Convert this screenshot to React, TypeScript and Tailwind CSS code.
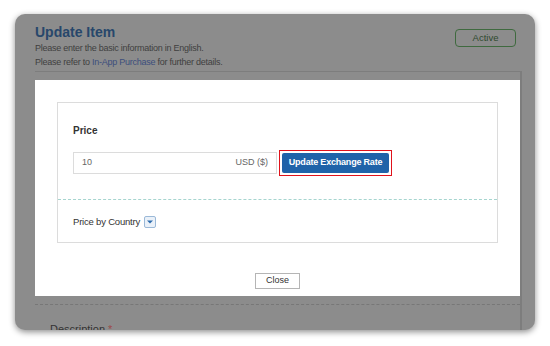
import React from 'react';

const font = { fontFamily: '"Liberation Sans", Arial, sans-serif' };

function DropIcon() {
  return (
    <span className="ml-[4px] inline-flex h-[12px] w-[12px] items-center justify-center rounded-[2px] border border-[#9bb9d8] bg-[#eaf1f9]">
      <svg width="6" height="4" viewBox="0 0 6 4">
        <path d="M0 0.5 L6 0.5 L3 3.5 Z" fill="#2d6cad" />
      </svg>
    </span>
  );
}

function PriceModal() {
  return (
    <div className="h-[216px] w-[485px] bg-white px-[22px] pt-[22px]">
      <div className="h-[141px] border border-[#dcdcdc]">
        <div className="px-[15px] pt-[21px]">
          <div className="text-[10px] font-bold leading-[14px] text-[#333]">Price</div>
          <div className="mt-[12px] flex items-center">
            <div className="flex h-[22px] w-[204px] items-center justify-between border border-[#dcdcdc] px-[8px] text-[9px] text-[#666]">
              <span>10</span>
              <span>USD ($)</span>
            </div>
            <div className="ml-[2px] border border-[#e0121b] p-[2px]">
              <button className="flex h-[20px] w-[107px] items-center justify-center rounded-[2px] bg-[#1f63a9] text-[9px] font-bold tracking-[-0.2px] text-white">
                Update Exchange Rate
              </button>
            </div>
          </div>
        </div>
        <div className="mt-[23px] border-t border-dashed border-[#a6d5cf]" />
        <div className="flex items-center px-[15px] pt-[15px] text-[9.5px] tracking-[-0.2px] text-[#333]">
          <span>Price by Country</span>
          <DropIcon />
        </div>
      </div>
      <div className="mt-[30px] flex justify-center">
        <button className="h-[16px] w-[45px] border border-[#b5b5b5] bg-white text-[9px] text-[#333]">Close</button>
      </div>
    </div>
  );
}

export default function App() {
  return (
    <div className="h-[346px] w-[550px] bg-white pl-[15px] pt-[14px]" style={font}>
      <div className="relative h-[316px] w-[520px] overflow-hidden rounded-[10px] bg-[#8c8c8c] shadow-[0_2px_6px_rgba(0,0,0,0.45)]">
        {/* Page header behind overlay */}
        <div className="flex items-start justify-between pl-[20px] pr-[19px] pt-[9px]">
          <div>
            <h1 className="text-[14px] font-bold leading-[18px] text-[#27476b]">Update Item</h1>
            <p className="text-[9px] leading-[14px] tracking-[-0.25px] text-[#3f3f3f]">
              Please enter the basic information in English.
            </p>
            <p className="text-[9px] leading-[14px] tracking-[-0.25px] text-[#3f3f3f]">
              Please refer to <span className="text-[#3c4e7c]">In-App Purchase</span> for further details.
            </p>
          </div>
          <div className="mt-[6px] flex h-[18px] w-[61px] items-center justify-center rounded-[4px] border border-[#3f6a3f] text-[9.5px] text-[#2e4a2e]">
            Active
          </div>
        </div>

        {/* Underlying form panel */}
        <div className="ml-[20px] mt-[2px] w-[487px] border-r-2 border-t border-[#7d7d7d]">
          <div className="h-[8px]" />
          <PriceModal />
          <div className="mt-[8px] border-t border-dashed border-[#777]" />
          <div className="pl-[15px] pt-[17px] text-[11px] leading-[14px] text-[#333]">
            Description <span className="text-[#9c4a4a]">*</span>
          </div>
        </div>
      </div>
    </div>
  );
}
